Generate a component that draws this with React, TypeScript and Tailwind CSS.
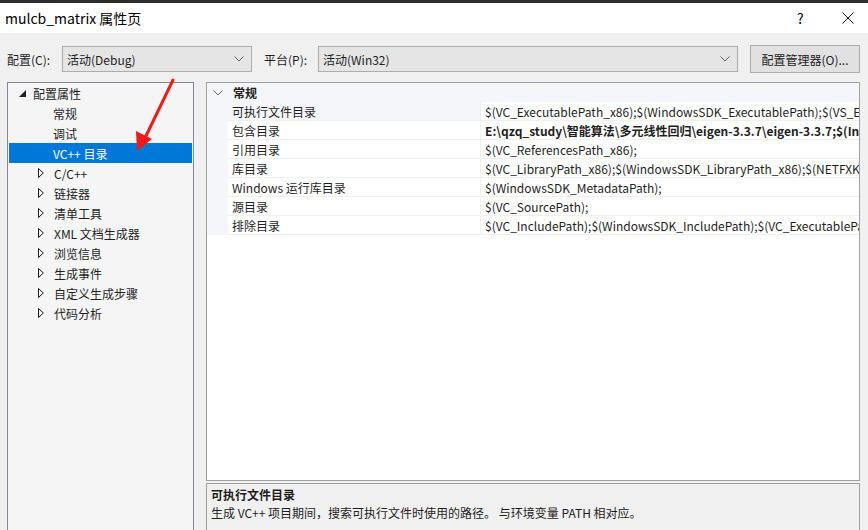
import React from "react";

const treeChildren = ["C/C++", "链接器", "清单工具", "XML 文档生成器", "浏览信息", "生成事件", "自定义生成步骤", "代码分析"];

const rows: { name: string; value: string; bold?: boolean; sel?: boolean }[] = [
  { name: "可执行文件目录", value: "$(VC_ExecutablePath_x86);$(WindowsSDK_ExecutablePath);$(VS_ExecutablePath);$(MSBuild_ExecutablePath)", sel: true },
  { name: "包含目录", value: "E:\\qzq_study\\智能算法\\多元线性回归\\eigen-3.3.7\\eigen-3.3.7;$(IncludePath)", bold: true },
  { name: "引用目录", value: "$(VC_ReferencesPath_x86);" },
  { name: "库目录", value: "$(VC_LibraryPath_x86);$(WindowsSDK_LibraryPath_x86);$(NETFXKitsDir)Lib\\um\\x86" },
  { name: "Windows 运行库目录", value: "$(WindowsSDK_MetadataPath);" },
  { name: "源目录", value: "$(VC_SourcePath);" },
  { name: "排除目录", value: "$(VC_IncludePath);$(WindowsSDK_IncludePath);$(VC_ExecutablePath_x86)" },
];

function Chevron({ className }: { className?: string }) {
  return (
    <svg width="10" height="6" viewBox="0 0 10 6" className={className}>
      <path d="M0.5 0.5 L5 5 L9.5 0.5" fill="none" stroke="#606060" strokeWidth="1" />
    </svg>
  );
}

function Collapsed() {
  return (
    <svg width="6" height="10" viewBox="0 0 6 10" className="shrink-0">
      <path d="M0.5 0.5 L5.3 5 L0.5 9.5 Z" fill="none" stroke="#1e1e1e" strokeWidth="1" />
    </svg>
  );
}

export default function App() {
  return (
    <div className="relative w-[868px] h-[530px] overflow-hidden bg-[#f0f0f0] text-[12px] text-[#1e1e1e] font-['Segoe_UI','Noto_Sans_CJK_SC',sans-serif] leading-[19px]">
      <div className="h-[3px] bg-[#2b2b2b]" />
      {/* title bar */}
      <div className="h-[30px] bg-white flex items-center pl-[5px]">
        <span className="text-[14px] text-black flex-1">mulcb_matrix 属性页</span>
        <span className="text-[14px] text-black w-[10px] mr-[35px]">?</span>
        <svg width="12" height="12" viewBox="0 0 12 12" className="mr-[14px]">
          <path d="M0.5 0.5 L11.5 11.5 M11.5 0.5 L0.5 11.5" stroke="#111" strokeWidth="1" />
        </svg>
      </div>
      {/* toolbar */}
      <div className="flex items-start pt-[13px] pb-[9px] pl-[7px] pr-[8px] h-[49px]">
        <span className="h-[26px] flex items-center w-[55px]">配置(C):</span>
        <div className="h-[26px] w-[190px] border border-[#adadad] bg-[#e5e5e5] flex items-center pl-[4px] pr-[7px]">
          <span className="flex-1">活动(Debug)</span>
          <Chevron />
        </div>
        <span className="h-[26px] flex items-center ml-[12px] w-[54px]">平台(P):</span>
        <div className="h-[26px] w-[420px] border border-[#adadad] bg-[#e5e5e5] flex items-center pl-[4px] pr-[7px]">
          <span className="flex-1">活动(Win32)</span>
          <Chevron />
        </div>
        <div className="ml-[12px] -mt-[1px] h-[28px] w-[110px] border border-[#adadad] bg-[#e1e1e1] flex items-center justify-center">
          配置管理器(O)...
        </div>
      </div>
      {/* main */}
      <div className="flex pl-[7px] pr-[8px] gap-[12px]">
        {/* tree */}
        <div className="w-[187px] h-[460px] shrink-0 border border-[#828790] bg-[#f5f5f5] px-[1px] pt-0">
          <div className="h-[20px] flex items-center">
            <svg width="7" height="7" viewBox="0 0 7 7" className="ml-[10px] mr-[7px]">
              <path d="M7 0 L7 7 L0 7 Z" fill="#1e1e1e" />
            </svg>
            <span>配置属性</span>
          </div>
          <div className="h-[20px] flex items-center pl-[44px]">常规</div>
          <div className="h-[20px] flex items-center pl-[44px]">调试</div>
          <div className="h-[20px] flex items-center pl-[44px] bg-[#0078d7] text-white">VC++ 目录</div>
          {treeChildren.map((t) => (
            <div key={t} className="h-[20px] flex items-center pl-[29px] gap-[10px]">
              <Collapsed />
              <span>{t}</span>
            </div>
          ))}
        </div>
        {/* right column */}
        <div className="flex-1 min-w-0 flex flex-col gap-[2px]">
          <div className="h-[399px] border border-[#a0a0a0] bg-white overflow-hidden">
            <div className="h-[19px] flex items-center bg-[#f4f6fa]">
              <Chevron className="ml-[6px] mr-[10px]" />
              <span className="font-bold">常规</span>
            </div>
            {rows.map((r) => (
              <div key={r.name} className="h-[19px] flex">
                <div className="w-[21px] shrink-0 bg-[#f4f6fa]" />
                <div
                  className={`w-[252px] shrink-0 pl-[4px] border-b border-[#f0f0f0] whitespace-nowrap ${
                    r.sel ? "bg-[#f4f6fa]" : "bg-white"
                  }`}
                >
                  {r.name}
                </div>
                <div
                  className={`flex-1 min-w-0 pl-[4px] border-l border-b border-[#f0f0f0] whitespace-nowrap overflow-hidden ${
                    r.bold ? "font-bold" : ""
                  }`}
                >
                  {r.value}
                </div>
              </div>
            ))}
          </div>
          <div className="h-[60px] border border-[#a0a0a0] bg-[#f0f0f0] pl-[4px] pt-[2px]">
            <div className="font-bold leading-[18px]">可执行文件目录</div>
            <div className="leading-[18px]">生成 VC++ 项目期间，搜索可执行文件时使用的路径。 与环境变量 PATH 相对应。</div>
          </div>
        </div>
      </div>
      {/* red arrow annotation */}
      <svg className="absolute left-0 top-0 pointer-events-none" width="868" height="530" viewBox="0 0 868 530">
        <path d="M173 80 L145 138" stroke="#f01a1a" strokeWidth="3" strokeLinecap="round" fill="none" />
        <path d="M137 151 L136 131 L152 139 Z" fill="#f01a1a" />
      </svg>
    </div>
  );
}
